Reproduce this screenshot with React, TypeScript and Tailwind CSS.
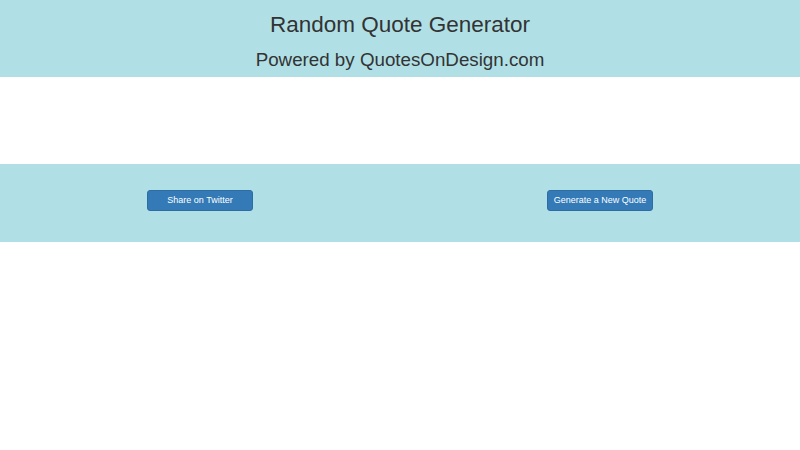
const Button = ({ label }: { label: string }) => (
  <button className="w-[106px] h-[21px] rounded-[3px] border border-[#2e6da4] bg-[#337ab7] text-[9px] leading-none text-white">
    {label}
  </button>
);

export default function App() {
  return (
    <div className="w-[800px] h-[450px] bg-white font-['Liberation_Sans',Arial,sans-serif] text-[#333]">
      <header className="h-[77px] bg-[#b0e0e6] pt-[12px] text-center">
        <h1 className="text-[22.5px] leading-[26px]">Random Quote Generator</h1>
        <h2 className="mt-[11px] text-[18.75px] leading-[22px]">Powered by QuotesOnDesign.com</h2>
      </header>
      <div className="h-[87px]" />
      <div className="h-[78px] bg-[#b0e0e6] grid grid-cols-2 items-start pt-[26px]">
        <div className="flex justify-center">
          <Button label="Share on Twitter" />
        </div>
        <div className="flex justify-center">
          <Button label="Generate a New Quote" />
        </div>
      </div>
    </div>
  );
}
